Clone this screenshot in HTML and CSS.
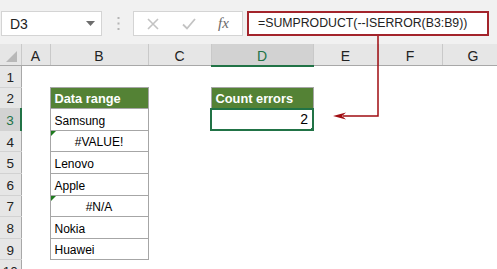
FILE: index.html
```html
<!DOCTYPE html>
<html lang="en">
<head>
    <meta charset="UTF-8">
    <meta name="viewport" content="width=device-width, initial-scale=1.0">
    <title>Count errors - SUMPRODUCT</title>
    <link rel="stylesheet" href="styles.css">
</head>
<body>

    <div class="topbar">
        <div class="namebox">
            <span>D3</span>
            <svg class="caret" width="9" height="5" viewBox="0 0 9 5"><polygon points="0,0 9,0 4.5,5" fill="#6d6d6d"/></svg>
        </div>
        <div class="grip">
            <svg width="3" height="13" viewBox="0 0 3 13"><rect x="0.5" y="0" width="2" height="2" fill="#b5b5b5"/><rect x="0.5" y="5.5" width="2" height="2" fill="#b5b5b5"/><rect x="0.5" y="11" width="2" height="2" fill="#b5b5b5"/></svg>
        </div>
        <div class="fxtools">
            <svg width="12" height="12" viewBox="0 0 12 12"><path d="M1 1 L11 11 M11 1 L1 11" stroke="#c3c3c3" stroke-width="1.6" fill="none"/></svg>
            <svg width="14" height="12" viewBox="0 0 14 12"><path d="M1 6.5 L5 10.5 L13 1" stroke="#c3c3c3" stroke-width="1.8" fill="none"/></svg>
            <span class="fx">fx</span>
        </div>
        <div class="formula">=SUMPRODUCT(--ISERROR(B3:B9))</div>
    </div>

    <table class="sheet">
        <colgroup>
            <col class="w-head">
            <col class="w-a">
            <col class="w-b">
            <col class="w-c">
            <col class="w-d">
            <col class="w-e">
            <col class="w-f">
            <col class="w-g">
        </colgroup>
        <tr class="colheads">
            <th class="corner"><svg width="21" height="21" viewBox="0 0 21 21"><polygon points="17,7 17,18 6,18" fill="#b8b8b8"/></svg></th>
            <th>A</th>
            <th>B</th>
            <th>C</th>
            <th class="sel">D</th>
            <th>E</th>
            <th>F</th>
            <th>G</th>
        </tr>
        <tr>
            <th class="rowhead">1</th>
            <td></td><td></td><td></td><td></td><td></td><td></td><td></td>
        </tr>
        <tr>
            <th class="rowhead">2</th>
            <td></td><td class="box head">Data range</td><td></td><td class="box head">Count errors</td><td></td><td></td><td></td>
        </tr>
        <tr>
            <th class="rowhead sel">3</th>
            <td></td><td class="box">Samsung</td><td></td><td class="active"><span class="value">2</span><span class="handle"></span></td><td></td><td></td><td></td>
        </tr>
        <tr>
            <th class="rowhead">4</th>
            <td></td><td class="box err">#VALUE!<span class="flag"></span></td><td></td><td></td><td></td><td></td><td></td>
        </tr>
        <tr>
            <th class="rowhead">5</th>
            <td></td><td class="box">Lenovo</td><td></td><td></td><td></td><td></td><td></td>
        </tr>
        <tr>
            <th class="rowhead">6</th>
            <td></td><td class="box">Apple</td><td></td><td></td><td></td><td></td><td></td>
        </tr>
        <tr>
            <th class="rowhead">7</th>
            <td></td><td class="box err">#N/A<span class="flag"></span></td><td></td><td></td><td></td><td></td><td></td>
        </tr>
        <tr>
            <th class="rowhead">8</th>
            <td></td><td class="box">Nokia</td><td></td><td></td><td></td><td></td><td></td>
        </tr>
        <tr>
            <th class="rowhead">9</th>
            <td></td><td class="box">Huawei</td><td></td><td></td><td></td><td></td><td></td>
        </tr>
        <tr>
            <th class="rowhead">10</th>
            <td></td><td></td><td></td><td></td><td></td><td></td><td></td>
        </tr>
    </table>

    <!-- callout from the formula bar to the result cell -->
    <svg class="arrow" width="497" height="269" viewBox="0 0 497 269">
        <path d="M378 36 L378 116 L343 116" stroke="#a00d12" stroke-width="1.5" fill="none"/>
        <polygon points="333,116 346,112.5 342,116 346,119.5" fill="#a00d12"/>
    </svg>

</body>
</html>
```

FILE: styles.css
```css
body {
    margin: 0;
    width: 497px;
    height: 269px;
    overflow: hidden;
    position: relative;
    background-color: #fff;
    font-family: 'Liberation Sans', Arial, sans-serif;
    color: #000;
}

.topbar {
    height: 44px;
    background-color: #f1f1f1;
    display: flex;
    align-items: flex-start;
    padding-top: 11px;
    padding-left: 1px;
    box-sizing: border-box;
}

.namebox {
    width: 101px;
    height: 25px;
    box-sizing: border-box;
    background-color: #fff;
    border: 1px solid #d4d4d4;
    display: flex;
    align-items: center;
    justify-content: space-between;
    padding: 0 6px 0 8px;
    font-size: 14px;
    color: #222;
}

.grip {
    width: 31px;
    height: 25px;
    display: flex;
    align-items: center;
    justify-content: center;
    padding-left: 1px;
    box-sizing: border-box;
}

.fxtools {
    width: 110px;
    height: 25px;
    box-sizing: border-box;
    background-color: #fff;
    border: 1px solid #d4d4d4;
    display: flex;
    align-items: center;
    padding-left: 13px;
    gap: 23px;
}

.fx {
    font-family: 'Liberation Serif', 'Times New Roman', serif;
    font-style: italic;
    font-size: 15px;
    color: #6a6a6a;
    margin-left: -1px;
}

.formula {
    width: 242px;
    height: 25px;
    margin-left: 4px;
    box-sizing: border-box;
    background-color: #fff;
    border: 2px solid #a3242b;
    padding-left: 9px;
    font-size: 12.3px;
    line-height: 21px;
    color: #222;
    white-space: nowrap;
}

.sheet {
    border-collapse: collapse;
    table-layout: fixed;
    width: 504px;
    font-size: 12px;
}

.w-head { width: 21px; }
.w-a { width: 29px; }
.w-b { width: 98px; }
.w-c { width: 63px; }
.w-d { width: 102px; }
.w-e { width: 65px; }
.w-f { width: 64px; }
.w-g { width: 62px; }

.sheet tr {
    height: 21.6px;
}

.sheet tr.colheads {
    height: 21px;
}

.sheet td {
    padding: 0 4px 2px 4px;
    vertical-align: bottom;
    white-space: nowrap;
    overflow: hidden;
}

.colheads th {
    background-color: #e6e6e6;
    border-right: 1px solid #c9c9c9;
    border-bottom: 1px solid #a8a8a8;
    font-weight: normal;
    font-size: 14px;
    color: #222;
    padding: 3px 0 0 0;
    text-align: center;
}

.colheads th.corner {
    padding: 0;
    line-height: 0;
    vertical-align: bottom;
}

.colheads th.corner svg {
    display: block;
}

.colheads th.sel {
    background-color: #d2d2d2;
    border-bottom: 2px solid #217346;
    color: #217346;
}

.rowhead {
    background-color: #e6e6e6;
    border-right: 1px solid #a8a8a8;
    border-bottom: 1px solid #d2d2d2;
    font-weight: normal;
    font-size: 13.5px;
    color: #222;
    text-align: center;
    padding: 2px 0 0 0;
}

.rowhead.sel {
    background-color: #d2d2d2;
    border-right: 2px solid #217346;
    color: #217346;
}

.box {
    border: 1px solid #a6a6a6;
}

.box.head {
    background-color: #548235;
    color: #fff;
    font-weight: bold;
    font-size: 12.8px;
}

.err {
    position: relative;
    text-align: center;
}

.flag {
    position: absolute;
    top: 0;
    left: 0;
    width: 0;
    height: 0;
    border-top: 5px solid #1f7a1f;
    border-right: 5px solid transparent;
}

.active {
    position: relative;
    border: 2px solid #217346;
    text-align: right;
    padding-right: 3px;
    overflow: visible;
}

.value {
    font-size: 14px;
}

.handle {
    position: absolute;
    right: -5px;
    bottom: -5px;
    width: 5px;
    height: 5px;
    background-color: #217346;
    border: 1px solid #fff;
}

.arrow {
    position: absolute;
    top: 0;
    left: 0;
    pointer-events: none;
}
```
